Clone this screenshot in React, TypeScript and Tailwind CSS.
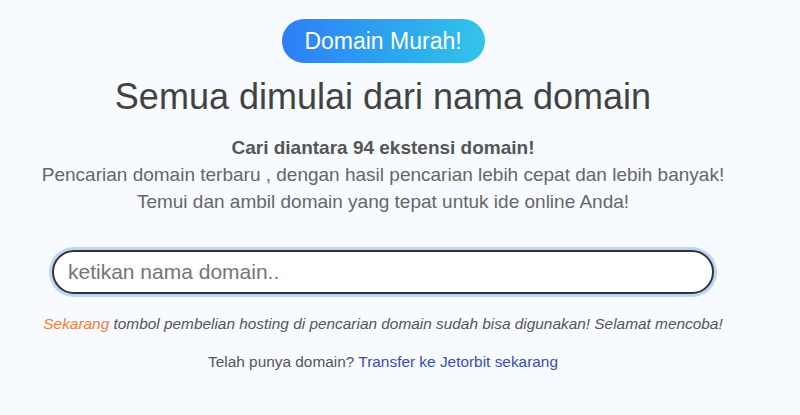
import React from "react";

export default function App() {
  return (
    <div className="w-full h-[415px] bg-[#f7fbff] overflow-hidden" style={{ fontFamily: '"Liberation Sans", Arial, sans-serif' }}>
      <div className="w-[766px] flex flex-col items-center pt-[19px]">
        <div className="h-[44px] w-[203px] rounded-full bg-gradient-to-r from-[#2f7df6] to-[#33c4e8] flex items-center justify-center text-white text-[23px]">
          Domain Murah!
        </div>
        <h1 className="mt-[13px] text-[36px] leading-[42px] text-[#424242]">Semua dimulai dari nama domain</h1>
        <div className="mt-[16px] text-center text-[#666]">
          <p className="text-[19px] leading-[27px] font-bold text-[#555]">Cari diantara 94 ekstensi domain!</p>
          <p className="text-[19px] leading-[27px]">Pencarian domain terbaru , dengan hasil pencarian lebih cepat dan lebih banyak!</p>
          <p className="text-[19px] leading-[27px]">Temui dan ambil domain yang tepat untuk ide online Anda!</p>
        </div>
        <div className="mt-[32px] w-[668px] rounded-full p-[3px] bg-[#bcd5f7]">
          <input
            className="w-full h-[44px] rounded-full border-2 border-[#333] bg-white px-[14px] text-[21px] text-[#333] placeholder:text-[#757575] outline-none"
            placeholder="ketikan nama domain.."
          />
        </div>
        <p className="mt-[15px] text-[15.4px] italic text-[#555]">
          <span className="text-[#f47c3c]">Sekarang</span> tombol pembelian hosting di pencarian domain sudah bisa digunakan! Selamat mencoba!
        </p>
        <p className="mt-[15px] text-[15.4px] text-[#555]">
          Telah punya domain? <a className="text-[#3a4db0]">Transfer ke Jetorbit sekarang</a>
        </p>
      </div>
    </div>
  );
}
